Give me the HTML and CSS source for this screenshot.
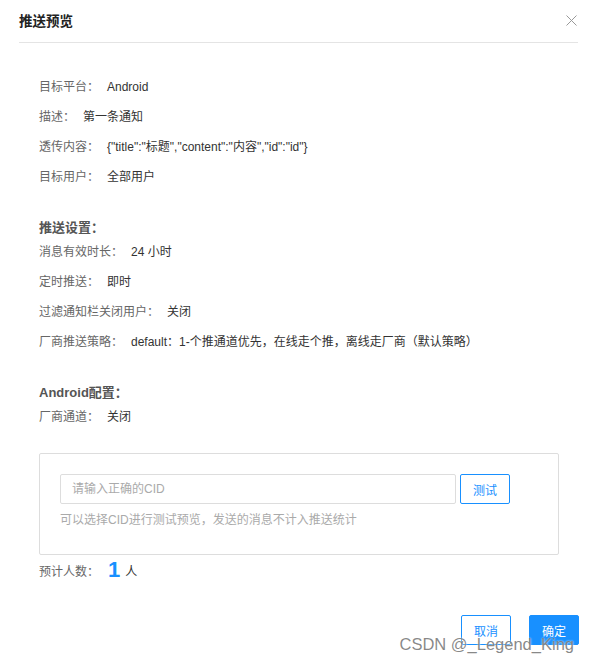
FILE: index.html
```html
<!DOCTYPE html>
<html lang="zh-CN">
<head>
<meta charset="utf-8">
<link rel="stylesheet" href="styles.css">
</head>
<body>
<div class="dialog">
  <div class="header">
    <span class="title">推送预览</span>
    <svg class="close" width="11" height="11" viewBox="0 0 11 11"><path d="M0.5 0.5 L10.5 10.5 M10.5 0.5 L0.5 10.5" stroke="#999" stroke-width="1" fill="none"/></svg>
  </div>
  <div class="body">
    <div class="group first">
      <div class="row"><span class="label">目标平台：</span><span class="value">Android</span></div>
      <div class="row"><span class="label">描述：</span><span class="value">第一条通知</span></div>
      <div class="row"><span class="label">透传内容：</span><span class="value">{"title":"标题","content":"内容","id":"id"}</span></div>
      <div class="row"><span class="label">目标用户：</span><span class="value">全部用户</span></div>
    </div>
    <div class="group">
      <div class="heading">推送设置：</div>
      <div class="row"><span class="label">消息有效时长：</span><span class="value">24 小时</span></div>
      <div class="row"><span class="label">定时推送：</span><span class="value">即时</span></div>
      <div class="row"><span class="label">过滤通知栏关闭用户：</span><span class="value">关闭</span></div>
      <div class="row"><span class="label">厂商推送策略：</span><span class="value">default：1-个推通道优先，在线走个推，离线走厂商（默认策略）</span></div>
    </div>
    <div class="group">
      <div class="heading">Android配置：</div>
      <div class="row"><span class="label">厂商通道：</span><span class="value">关闭</span></div>
    </div>
    <div class="test-box">
      <div class="test-row">
        <input class="cid" type="text" placeholder="请输入正确的CID">
        <button class="btn btn-outline">测试</button>
      </div>
      <div class="hint">可以选择CID进行测试预览，发送的消息不计入推送统计</div>
    </div>
    <div class="count-row"><span class="label">预计人数：</span><span class="count">1</span><span class="unit">人</span></div>
  </div>
  <div class="footer">
    <button class="btn btn-outline">取消</button>
    <button class="btn btn-primary">确定</button>
  </div>
</div>
<div class="watermark">CSDN @_Legend_King</div>
</body>
</html>
```
FILE: styles.css
```css
* { box-sizing: border-box; }
html, body { margin: 0; padding: 0; background: #fff; }
body {
  font-family: "Liberation Sans", "Noto Sans CJK SC", sans-serif;
  font-size: 12px;
  color: #333;
  width: 590px;
  height: 662px;
  position: relative;
  overflow: hidden;
}
.header {
  margin: 0 12px 0 19px;
  height: 43px;
  border-bottom: 1px solid #e4e4e4;
  display: flex;
  align-items: center;
  justify-content: space-between;
  padding-bottom: 3px;
}
.title {
  font-size: 13.5px;
  font-weight: bold;
  color: #222;
}
.close { margin-right: 1px; margin-top: 1px; }
.body {
  padding: 29px 31px 0 39px;
}
.group + .group { margin-top: 27px; }
.row {
  height: 30px;
  line-height: 30px;
  white-space: nowrap;
}
.label { color: #666; }
.value { color: #333; margin-left: 8px; }
.heading {
  height: 18px;
  line-height: 18px;
  font-size: 13px;
  font-weight: bold;
  color: #555;
}
.test-box {
  margin-top: 21px;
  border: 1px solid #ddd;
  border-radius: 2px;
  padding: 20px 20px 20px 20px;
  height: 102px;
}
.test-row { display: flex; gap: 4px; }
.cid {
  width: 396px;
  height: 30px;
  border: 1px solid #ddd;
  border-radius: 2px;
  padding: 0 11px;
  font-family: inherit;
  font-size: 12px;
  color: #333;
  outline: none;
}
.cid::placeholder { color: #aaa; }
.hint {
  margin-top: 6px;
  line-height: 20px;
  color: #aaa;
}
.btn {
  width: 50px;
  height: 30px;
  border-radius: 2px;
  font-family: inherit;
  font-size: 12px;
  padding: 0;
  cursor: pointer;
}
.btn-outline {
  background: #fff;
  border: 1px solid #1890ff;
  color: #1890ff;
}
.btn-primary {
  background: #1890ff;
  border: 1px solid #1890ff;
  color: #fff;
}
.count-row {
  height: 30px;
  display: flex;
  align-items: center;
}
.count {
  margin-left: 9px;
  font-size: 22px;
  font-weight: bold;
  color: #1890ff;
  line-height: 1;
}
.unit { margin-left: 5px; color: #333; }
.footer {
  margin-top: 30px;
  display: flex;
  justify-content: flex-end;
  gap: 18px;
  padding-right: 11px;
}
.watermark {
  position: absolute;
  right: 16px;
  bottom: 8px;
  font-size: 16.5px;
  color: rgba(115,115,115,0.85);
  text-shadow: 0 0 2px #fff;
  white-space: nowrap;
}
```
